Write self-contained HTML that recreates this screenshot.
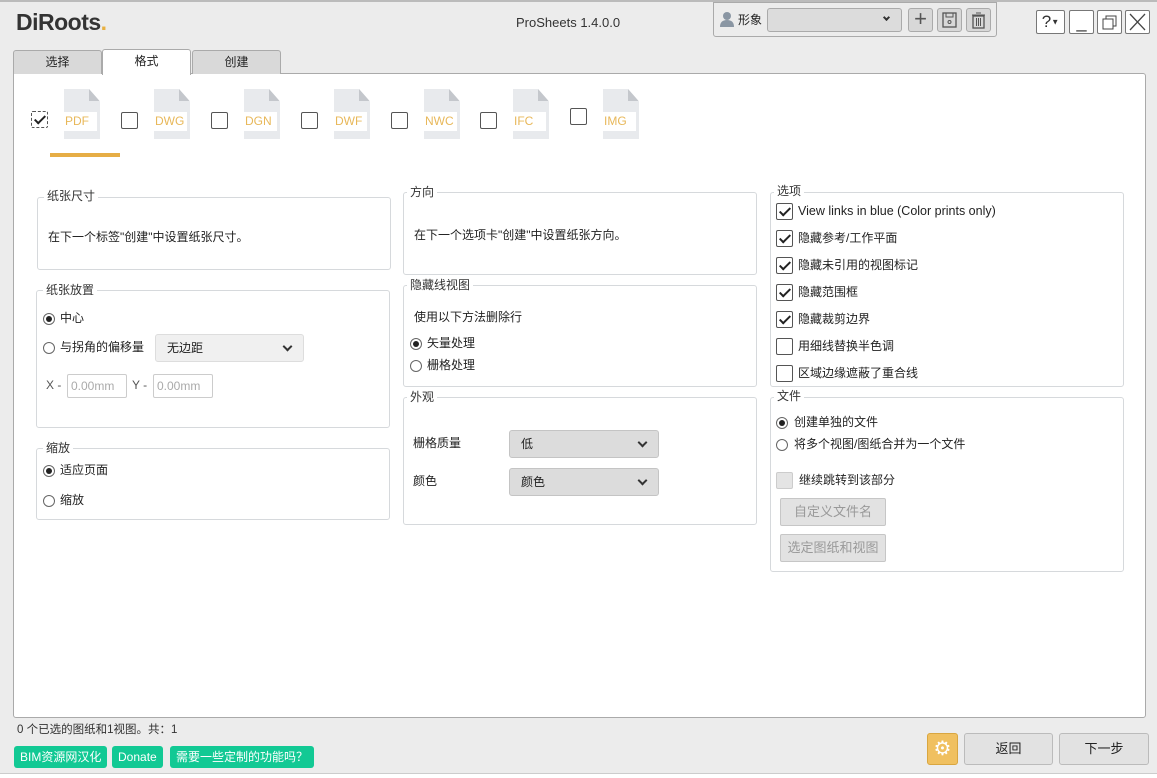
<!DOCTYPE html>
<html><head><meta charset="utf-8"><style>
*{box-sizing:border-box;margin:0;padding:0}
body{width:1157px;height:778px;background:#ececec;font-family:"Liberation Sans","Noto Sans CJK SC",sans-serif;font-size:12px;color:#222;position:relative;overflow:hidden}
.a{position:absolute}
.grp{position:absolute;border:1px solid #d6d9dc;border-radius:3px;background:#fff}
.gt{position:absolute;top:-9px;left:6px;background:#fff;padding:0 3px;font-size:12px;color:#333;line-height:16px}
.cb{position:absolute;width:17px;height:17px;border:1px solid #555;border-radius:2px;background:#fff}
.cb.on::after{content:"";position:absolute;left:5px;top:1px;width:4px;height:9px;border:solid #222;border-width:0 2px 2px 0;transform:rotate(45deg)}
.rd{position:absolute;width:12px;height:12px;border:1px solid #666;border-radius:50%;background:#fff}
.rd.on::after{content:"";position:absolute;left:2px;top:2px;width:6px;height:6px;border-radius:50%;background:#222}
.sel{position:absolute;background:#dcdcdc;border:1px solid #c4c4c4;border-radius:3px;padding-left:11px;line-height:26px;font-size:12px}
.sel::after{content:"";position:absolute;right:12px;top:8px;width:5px;height:5px;border:solid #333;border-width:0 2px 2px 0;transform:rotate(45deg)}
.fi{position:absolute;width:36px;height:50px;background:#e8eaed;clip-path:polygon(0 0,70% 0,100% 25%,100% 100%,0 100%)}
.fi .c{position:absolute;right:0;top:0;width:11px;height:12px;background:#c4c7cc;clip-path:polygon(0 0,100% 100%,0 100%)}
.fi .l{position:absolute;left:0;top:23px;width:33px;height:19px;background:#fff;color:#e8b85a;font-size:12px;line-height:19px;padding-left:1px}
.tab{position:absolute;top:50px;height:24px;background:#d9d9d9;border:1px solid #aaa;border-bottom:none;border-radius:3px 3px 0 0;text-align:center;line-height:22px}
.wb{position:absolute;top:10px;width:25px;height:24px;border:1px solid #777;border-radius:2px;background:#fff;text-align:center;font-size:18px;line-height:22px;color:#333}
.gb{position:absolute;top:746px;height:22px;background:#12c994;color:#fff;border-radius:3px;line-height:22px;padding:0 6px;font-size:12px}
.t{position:absolute;font-size:12px;line-height:16px;white-space:nowrap}
.dis{position:absolute;background:#e2e2e2;border:1px solid #c6c6c6;border-radius:2px;color:#999;text-align:center;line-height:25px;font-size:13px}
</style></head><body>
<div class="a" style="left:0;top:0;width:1157px;height:2px;background:#bbb"></div>
<div class="a" style="left:16px;top:9px;font-size:23px;color:#333;font-weight:bold;letter-spacing:-0.5px">DiRoots<span style="color:#e8b040">.</span></div>
<div class="t" style="left:516px;top:15px;font-size:13px;color:#333">ProSheets 1.4.0.0</div>
<div class="a" style="left:713px;top:2px;width:284px;height:35px;border:1px solid #aaa;border-radius:0 0 3px 3px;background:#ececec"></div>
<svg class="a" style="left:719px;top:11px" width="16" height="16"><circle cx="8" cy="5" r="4" fill="#8a96a3"/><path d="M1 16 Q1 9 8 9 Q15 9 15 16Z" fill="#8a96a3"/></svg>
<div class="t" style="left:738px;top:12px">形象</div>
<div class="a" style="left:767px;top:8px;width:135px;height:24px;background:#dcdcdc;border:1px solid #aaa;border-radius:3px"></div>
<div class="a" style="left:884px;top:15px;width:5px;height:5px;border:solid #333;border-width:0 2px 2px 0;transform:rotate(45deg)"></div>
<div class="a" style="left:908px;top:8px;width:25px;height:24px;background:#d8d8d8;border:1px solid #aaa;border-radius:3px;font-size:22px;line-height:20px;text-align:center;color:#555">+</div>
<div class="a" style="left:937px;top:8px;width:25px;height:24px;background:#d8d8d8;border:1px solid #aaa;border-radius:3px"><svg width="23" height="22"><rect x="5" y="4" width="13" height="14" fill="none" stroke="#555" stroke-width="1.3"/><rect x="8" y="4" width="7" height="4" fill="none" stroke="#555"/><circle cx="11.5" cy="13" r="1.5" fill="none" stroke="#555"/></svg></div>
<div class="a" style="left:966px;top:8px;width:25px;height:24px;background:#d8d8d8;border:1px solid #aaa;border-radius:3px"><svg width="23" height="22"><rect x="6" y="7" width="11" height="12" fill="none" stroke="#555" stroke-width="1.3"/><path d="M5 6h13M9 4h5M9.5 9v8M11.5 9v8M13.5 9v8" stroke="#555"/></svg></div>
<div class="wb" style="left:1036px;width:29px;font-size:17px">?<span style="font-size:8px;vertical-align:middle">▼</span></div>
<div class="wb" style="left:1069px">_</div>
<div class="wb" style="left:1097px"><svg width="23" height="22"><rect x="5" y="8" width="10" height="10" fill="none" stroke="#444"/><path d="M8 8V5h10v10h-3" fill="none" stroke="#444"/></svg></div>
<div class="wb" style="left:1125px"><svg width="23" height="22"><path d="M4 3L19 19M19 3L4 19" stroke="#444" stroke-width="1.3"/></svg></div>

<div class="a" style="left:13px;top:73px;width:1133px;height:645px;background:#fff;border:1px solid #aaa;border-radius:0 3px 3px 3px"></div>
<div class="tab" style="left:13px;width:89px">选择</div>
<div class="tab" style="left:102px;top:49px;width:89px;height:26px;background:#fff;z-index:2">格式</div>
<div class="tab" style="left:192px;width:89px">创建</div>

<div class="cb on" style="left:31px;top:111px;border-style:dashed"></div>
<div class="fi" style="left:64px;top:89px"><div class="c"></div><div class="l">PDF</div></div>
<div class="cb" style="left:121px;top:112px"></div>
<div class="fi" style="left:154px;top:89px"><div class="c"></div><div class="l">DWG</div></div>
<div class="cb" style="left:211px;top:112px"></div>
<div class="fi" style="left:244px;top:89px"><div class="c"></div><div class="l">DGN</div></div>
<div class="cb" style="left:301px;top:112px"></div>
<div class="fi" style="left:334px;top:89px"><div class="c"></div><div class="l">DWF</div></div>
<div class="cb" style="left:391px;top:112px"></div>
<div class="fi" style="left:424px;top:89px"><div class="c"></div><div class="l">NWC</div></div>
<div class="cb" style="left:480px;top:112px"></div>
<div class="fi" style="left:513px;top:89px"><div class="c"></div><div class="l">IFC</div></div>
<div class="cb" style="left:570px;top:108px"></div>
<div class="fi" style="left:603px;top:89px"><div class="c"></div><div class="l">IMG</div></div>
<div class="a" style="left:50px;top:153px;width:70px;height:4px;background:#e6ad45"></div>

<div class="grp" style="left:37px;top:197px;width:354px;height:73px"><div class="gt" style="top:-10px">纸张尺寸</div><div class="t" style="left:10px;top:31px">在下一个标签"创建"中设置纸张尺寸。</div></div>
<div class="grp" style="left:36px;top:290px;width:354px;height:138px"><div class="gt">纸张放置</div>
<div class="rd on" style="left:6px;top:22px"></div><div class="t" style="left:23px;top:19px">中心</div>
<div class="rd" style="left:6px;top:51px"></div><div class="t" style="left:23px;top:48px">与拐角的偏移量</div>
<div class="sel" style="left:118px;top:43px;width:149px;background:#f0f0f0;border-color:#ddd">无边距</div>
<div class="t" style="left:9px;top:86px;color:#555">X -</div><div class="a" style="left:30px;top:83px;width:60px;height:24px;border:1px solid #ccc;border-radius:2px;color:#aaa;font-size:12px;line-height:22px;padding-left:3px">0.00mm</div>
<div class="t" style="left:95px;top:86px;color:#555">Y -</div><div class="a" style="left:116px;top:83px;width:60px;height:24px;border:1px solid #ccc;border-radius:2px;color:#aaa;font-size:12px;line-height:22px;padding-left:3px">0.00mm</div>
</div>
<div class="grp" style="left:36px;top:448px;width:354px;height:72px"><div class="gt">缩放</div>
<div class="rd on" style="left:6px;top:16px"></div><div class="t" style="left:23px;top:13px">适应页面</div>
<div class="rd" style="left:6px;top:46px"></div><div class="t" style="left:23px;top:43px">缩放</div></div>

<div class="grp" style="left:403px;top:192px;width:354px;height:83px"><div class="gt" style="left:3px">方向</div><div class="t" style="left:10px;top:34px">在下一个选项卡"创建"中设置纸张方向。</div></div>
<div class="grp" style="left:403px;top:285px;width:354px;height:102px"><div class="gt" style="left:3px">隐藏线视图</div>
<div class="t" style="left:10px;top:23px">使用以下方法删除行</div>
<div class="rd on" style="left:6px;top:52px"></div><div class="t" style="left:23px;top:49px">矢量处理</div>
<div class="rd" style="left:6px;top:74px"></div><div class="t" style="left:23px;top:71px">栅格处理</div></div>
<div class="grp" style="left:403px;top:397px;width:354px;height:128px"><div class="gt" style="left:3px">外观</div>
<div class="t" style="left:9px;top:37px">栅格质量</div><div class="sel" style="left:105px;top:32px;width:150px">低</div>
<div class="t" style="left:9px;top:75px">颜色</div><div class="sel" style="left:105px;top:70px;width:150px">颜色</div></div>

<div class="grp" style="left:770px;top:192px;width:354px;height:195px"><div class="gt" style="left:3px;top:-10px">选项</div>
<div class="cb on" style="left:5px;top:10px"></div><div class="t" style="left:27px;top:10px;font-size:12.5px">View links in blue (Color prints only)</div>
<div class="cb on" style="left:5px;top:37px"></div><div class="t" style="left:27px;top:37px">隐藏参考/工作平面</div>
<div class="cb on" style="left:5px;top:64px"></div><div class="t" style="left:27px;top:64px">隐藏未引用的视图标记</div>
<div class="cb on" style="left:5px;top:91px"></div><div class="t" style="left:27px;top:91px">隐藏范围框</div>
<div class="cb on" style="left:5px;top:118px"></div><div class="t" style="left:27px;top:118px">隐藏裁剪边界</div>
<div class="cb" style="left:5px;top:145px"></div><div class="t" style="left:27px;top:145px">用细线替换半色调</div>
<div class="cb" style="left:5px;top:172px"></div><div class="t" style="left:27px;top:172px">区域边缘遮蔽了重合线</div></div>
<div class="grp" style="left:770px;top:397px;width:354px;height:175px"><div class="gt" style="left:3px;top:-10px">文件</div>
<div class="rd on" style="left:5px;top:19px"></div><div class="t" style="left:23px;top:16px">创建单独的文件</div>
<div class="rd" style="left:5px;top:41px"></div><div class="t" style="left:23px;top:38px">将多个视图/图纸合并为一个文件</div>
<div class="cb" style="left:5px;top:74px;background:#e4e4e4;border-color:#ccc"></div><div class="t" style="left:28px;top:74px">继续跳转到该部分</div>
<div class="dis" style="left:9px;top:100px;width:106px;height:28px">自定义文件名</div>
<div class="dis" style="left:9px;top:136px;width:106px;height:28px">选定图纸和视图</div></div>

<div class="t" style="left:17px;top:722px;font-size:11.5px;color:#333">0 个已选的图纸和1视图。共：1</div>
<div class="gb" style="left:14px">BIM资源网汉化</div>
<div class="gb" style="left:112px">Donate</div>
<div class="gb" style="left:170px">需要一些定制的功能吗？</div>
<div class="a" style="left:927px;top:733px;width:31px;height:32px;background:#f0c060;border:1px solid #d9a640;border-radius:3px;color:#fff;text-align:center;font-size:20px;line-height:30px">⚙</div>
<div class="a" style="left:964px;top:733px;width:89px;height:32px;background:#e2e2e2;border:1px solid #bbb;border-radius:3px;text-align:center;line-height:30px;font-size:13px">返回</div>
<div class="a" style="left:1059px;top:733px;width:90px;height:32px;background:#e2e2e2;border:1px solid #bbb;border-radius:3px;text-align:center;line-height:30px;font-size:13px">下一步</div>
<div class="a" style="left:0;top:773px;width:1157px;height:5px;background:#fff;border-top:1px solid #ccc"></div>
</body></html>
